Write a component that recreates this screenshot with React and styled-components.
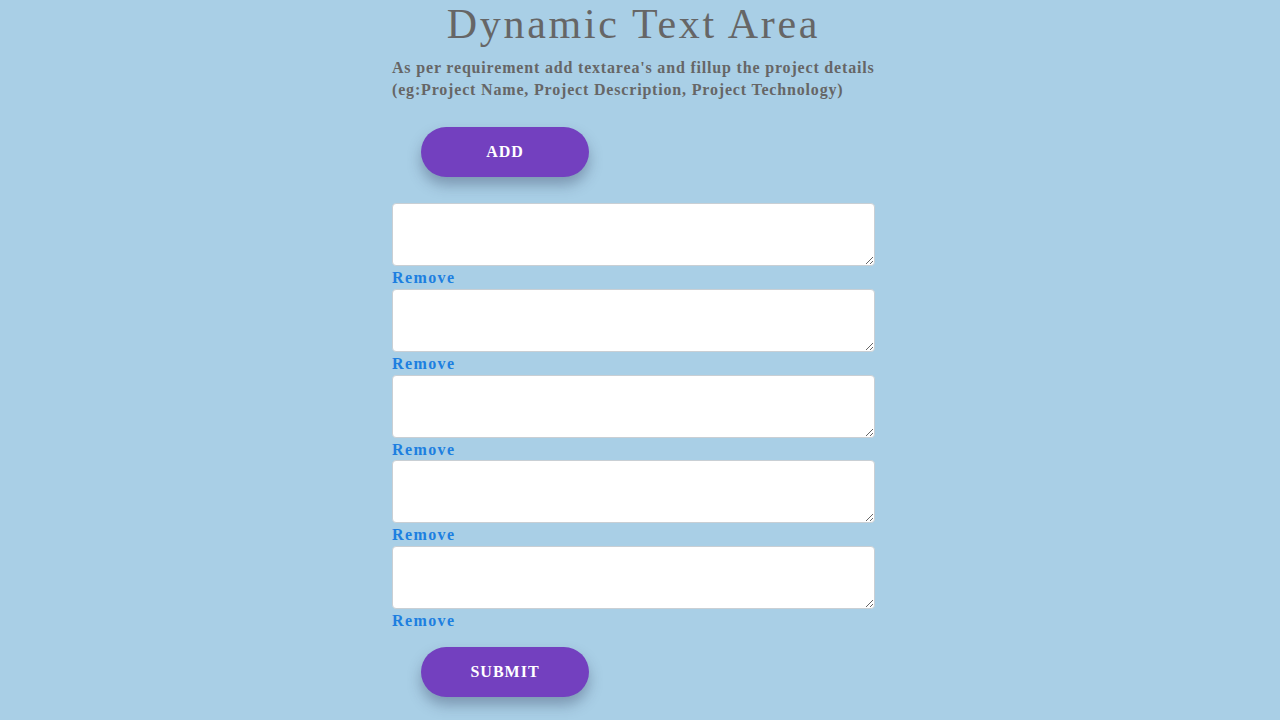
import React, { useState } from "react";
import styled, { createGlobalStyle } from "styled-components";

const Global = createGlobalStyle`
  html, body { margin: 0; padding: 0; }
  body {
    background: #a9cfe6;
    font-family: "Liberation Serif", "Times New Roman", serif;
    min-height: 720px;
  }
`;

const Page = styled.div`
  display: flex;
  justify-content: center;
  padding-right: 13px;
`;

const Column = styled.div`
  width: 483px;
  display: flex;
  flex-direction: column;
  align-items: flex-start;
`;

const Title = styled.h1`
  margin: 0;
  align-self: stretch;
  text-align: center;
  font-weight: normal;
  font-size: 42px;
  line-height: 48px;
  letter-spacing: 2.7px;
  color: #666666;
`;

const Subtitle = styled.p`
  margin: 9px 0 0;
  font-weight: bold;
  font-size: 16px;
  line-height: 22px;
  letter-spacing: 0.82px;
  white-space: nowrap;
  color: #666666;
`;

const PillButton = styled.button`
  margin: ${(p) => p.$mt}px 0 0 29px;
  width: 168px;
  height: 50px;
  border: none;
  border-radius: 25px;
  background: #7340bf;
  color: #ffffff;
  font-family: "Liberation Serif", "Times New Roman", serif;
  font-weight: bold;
  font-size: 16px;
  letter-spacing: 1px;
  text-transform: uppercase;
  box-shadow: 0 8px 14px rgba(40, 50, 80, 0.35);
  cursor: pointer;
`;

const List = styled.div`
  margin-top: 26px;
  align-self: stretch;
  display: flex;
  flex-direction: column;
`;

const Item = styled.div`
  display: flex;
  flex-direction: column;
  align-items: flex-start;
`;

const Area = styled.textarea`
  box-sizing: border-box;
  width: 483px;
  height: 63px;
  margin: 0;
  border: 1px solid #c9cfd4;
  border-radius: 4px;
  background: #ffffff;
  display: block;
`;

const RemoveLink = styled.a`
  display: block;
  height: 22.75px;
  line-height: 24px;
  overflow: visible;
  font-weight: bold;
  font-size: 16px;
  letter-spacing: 1.4px;
  color: #1d7fe0;
  text-decoration: none;
  cursor: pointer;
`;

export default function App() {
  const [items, setItems] = useState([0, 1, 2, 3, 4]);
  const [next, setNext] = useState(5);
  return (
    <>
      <Global />
      <Page>
        <Column>
          <Title>Dynamic Text Area</Title>
          <Subtitle>
            As per requirement add textarea's and fillup the project details
            <br />
            (eg:Project Name, Project Description, Project Technology)
          </Subtitle>
          <PillButton
            $mt={26}
            onClick={() => {
              setItems([...items, next]);
              setNext(next + 1);
            }}
          >
            Add
          </PillButton>
          <List>
            {items.map((id) => (
              <Item key={id}>
                <Area />
                <RemoveLink onClick={() => setItems(items.filter((i) => i !== id))}>
                  Remove
                </RemoveLink>
              </Item>
            ))}
          </List>
          <PillButton $mt={15}>Submit</PillButton>
        </Column>
      </Page>
    </>
  );
}
